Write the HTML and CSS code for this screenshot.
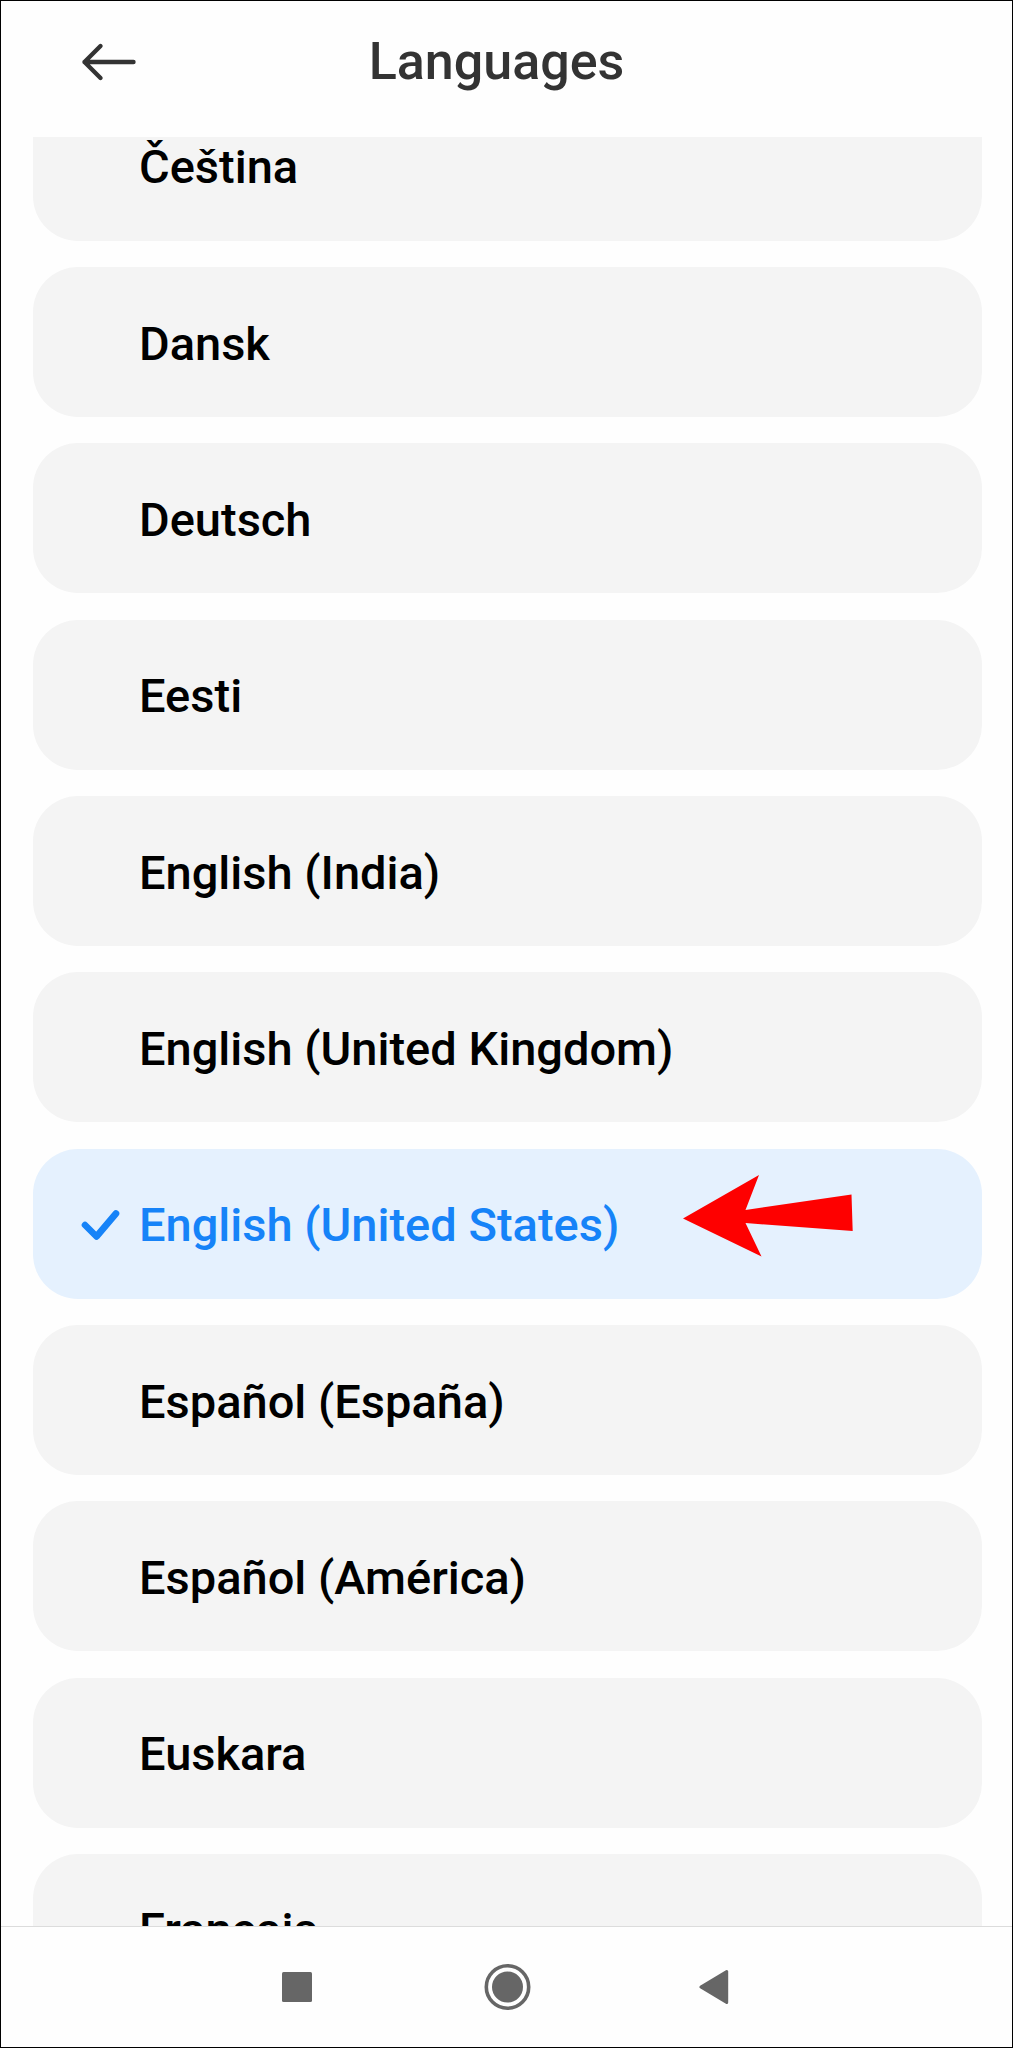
FILE: index.html
```html
<!DOCTYPE html>
<html lang="en">
<head>
  <meta charset="UTF-8" />
  <title>Languages</title>
  <link rel="stylesheet" href="styles.css">
</head>
<body>
  <div class="screen">
    <header class="header">
      <svg class="back" width="60" height="44" viewBox="0 0 60 44">
        <path d="M21.5 6 L5.5 22 L21.5 38 M5.5 22 H54.5" />
      </svg>
      <h1>Languages</h1>
    </header>

    <main class="list">
      <div class="item"><span>Čeština</span></div>
      <div class="item"><span>Dansk</span></div>
      <div class="item"><span>Deutsch</span></div>
      <div class="item"><span>Eesti</span></div>
      <div class="item"><span>English (India)</span></div>
      <div class="item"><span>English (United Kingdom)</span></div>
      <div class="item selected">
        <svg class="check" width="44" height="40" viewBox="0 0 44 40">
          <path d="M6 20 L17.5 31.5 L37 8.5" />
        </svg>
        <span>English (United States)</span>
        <svg class="pointer" width="170" height="82" viewBox="0 0 170 82">
          <path d="M0 43.5 L76 0 L62.5 35 L168.5 19.5 L169.7 56 L62.5 48 L78.5 81.5 Z" />
        </svg>
      </div>
      <div class="item"><span>Español (España)</span></div>
      <div class="item"><span>Español (América)</span></div>
      <div class="item"><span>Euskara</span></div>
      <div class="item"><span>Français</span></div>
    </main>

    <nav class="navbar">
      <svg width="48" height="48" viewBox="0 0 48 48">
        <rect x="9" y="9" width="30" height="30" rx="1.5" />
      </svg>
      <svg width="48" height="48" viewBox="0 0 48 48">
        <circle class="ring" cx="24.5" cy="24" r="21.2" />
        <circle cx="24.5" cy="24" r="15.5" />
      </svg>
      <svg width="48" height="48" viewBox="0 0 48 48">
        <path class="triangle" d="M7.9 24 L33.7 8.5 V39.5 Z" />
      </svg>
    </nav>
  </div>
</body>
</html>
```

FILE: styles.css
```css
* {
  box-sizing: border-box;
}
body {
  margin: 0;
  font-family: Roboto, "Liberation Sans", sans-serif;
  background: #fff;
}
.screen {
  display: flex;
  flex-direction: column;
  height: 2048px;
  border: 1px solid #000;
  background: #fefefe;
  overflow: hidden;
}
.header {
  display: grid;
  grid-template-columns: 1fr auto 1fr;
  flex: none;
  height: 136px;
  padding: 0 98px 14px 78px;
  align-items: center;
}
.header h1 {
  margin: 0;
  font-size: 52px;
  line-height: 60px;
  font-weight: 500;
  color: #333;
}
.back {
  fill: none;
  stroke: #333;
  stroke-width: 4.4;
  stroke-linecap: round;
  stroke-linejoin: round;
}

/* scrolled list, first and last rows are cut off */
.list {
  flex: 1;
  min-height: 0;
  padding: 0 30px 0 32px;
  overflow: hidden;
}
.item {
  display: flex;
  position: relative;
  align-items: center;
  height: 150px;
  margin-bottom: 26.34px;
  padding: 2px 0 0 106px;
  border-radius: 45px;
  background: #f4f4f4;
  color: #000;
  font-size: 47px;
  font-weight: 500;
  white-space: nowrap;
}
.item:first-child {
  margin-top: -46.3px;
}
.selected {
  padding-left: 46px;
  background: #e5f1fe;
  color: #1683f8;
}
.check {
  width: 44px;
  margin-right: 16px;
  fill: none;
  stroke: #1683f8;
  stroke-width: 6.6;
  stroke-linecap: round;
  stroke-linejoin: round;
}
.pointer {
  position: absolute;
  left: 650px;
  top: 26px;
  fill: #fe0000;
}

.navbar {
  display: flex;
  flex: none;
  justify-content: center;
  align-items: center;
  gap: 162px;
  height: 121px;
  border-top: 1px solid #dcdcdc;
  fill: #666;
}
.ring {
  fill: none;
  stroke: #666;
  stroke-width: 3.6;
}
.triangle {
  stroke: #666;
  stroke-width: 3;
  stroke-linejoin: round;
}
```
